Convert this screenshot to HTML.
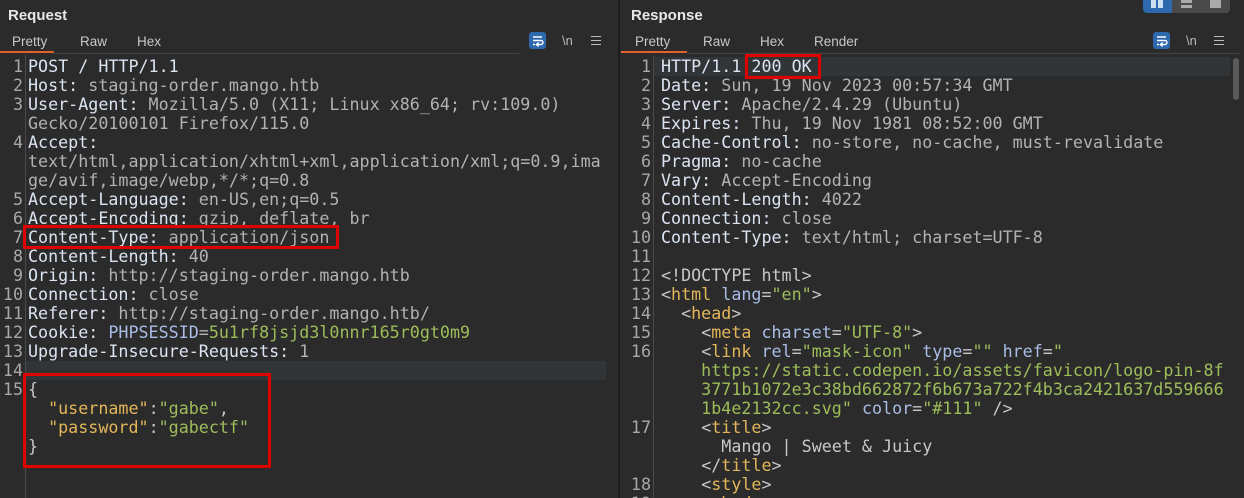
<!DOCTYPE html>
<html style="width:1244px;height:498px;overflow:hidden"><head><meta charset="utf-8"><style>
*{margin:0;padding:0;box-sizing:border-box}
body{width:1244px;height:498px;background:#2b2b2b;overflow:hidden;position:relative;font-family:"Liberation Sans",sans-serif;color:#ddd}
.t{position:absolute;font-weight:bold;font-size:15px;color:#e8e8e8}
.tab{position:absolute;top:34px;font-size:13.5px;color:#c8c8c8}
.ul{position:absolute;top:51px;height:2px;background:#e2622b}
.sep{position:absolute;top:53px;height:1px;background:#444}
.code{position:absolute;font-family:"DejaVu Sans Mono",monospace;font-size:16.7px;line-height:19px;white-space:pre;color:#b2b2b2}
.num{position:absolute;font-family:"DejaVu Sans Mono",monospace;font-size:16.7px;line-height:19px;white-space:pre;color:#a8a8a8;text-align:right}
.k{color:#dbe4f2}.b{color:#a9bde6}.g{color:#9dbd5a}.o{color:#e3b65a}.w{color:#c8c8c8}
.box{position:absolute;border:3px solid #e00000}
.hl{position:absolute;height:19px;background:#323538}
.gut{position:absolute;top:55px;width:1px;height:443px;background:#4a4a4a}
.ic{position:absolute;top:32px;width:17px;height:17px;background:#2e68ad;border-radius:3px}
.nl{position:absolute;top:33px;font-size:13px;color:#bbb;font-family:"Liberation Sans",sans-serif}
.hm{position:absolute;top:36px;width:10px;height:9px;border-top:1.5px solid #bbb;border-bottom:1.5px solid #bbb}
.hm:after{content:"";position:absolute;left:0;right:0;top:2.5px;border-top:1.5px solid #bbb}
.clip{position:absolute;left:0;top:0;width:1244px;height:498px;overflow:hidden}
</style></head><body><div class="clip">
<div style="position:absolute;left:618px;top:0;width:2px;height:498px;background:#1e1e1e"></div>
<div class="t" style="left:8px;top:7px">Request</div>
<div class="t" style="left:631px;top:7px">Response</div>
<div class="tab" style="left:12px">Pretty</div><div class="tab" style="left:80px">Raw</div><div class="tab" style="left:137px">Hex</div>
<div class="tab" style="left:635px">Pretty</div><div class="tab" style="left:703px">Raw</div><div class="tab" style="left:760px">Hex</div><div class="tab" style="left:814px">Render</div>
<div class="ul" style="left:0;width:54px"></div><div class="ul" style="left:621px;width:66px"></div>
<div class="sep" style="left:54px;width:465px"></div><div class="sep" style="left:687px;width:552px"></div>
<div class="ic" style="left:529px"><svg width="17" height="17"><path d="M4 5h9M4 8.5h8a2 2 0 0 1 0 4H8M9.5 10.5l-2 2 2 2M4 12.5h2" stroke="#fff" stroke-width="1.4" fill="none"/></svg></div>
<div class="nl" style="left:562px">\n</div><div class="hm" style="left:591px"></div>
<div class="ic" style="left:1153px"><svg width="17" height="17"><path d="M4 5h9M4 8.5h8a2 2 0 0 1 0 4H8M9.5 10.5l-2 2 2 2M4 12.5h2" stroke="#fff" stroke-width="1.4" fill="none"/></svg></div>
<div class="nl" style="left:1186px">\n</div><div class="hm" style="left:1214px"></div>
<div style="position:absolute;left:1143px;top:0;width:29px;height:13px;background:#2e68ad;border-radius:0 0 0 4px"></div>
<div style="position:absolute;left:1172px;top:0;width:29px;height:13px;background:#4a4a4a"></div>
<div style="position:absolute;left:1201px;top:0;width:29px;height:13px;background:#4a4a4a;border-radius:0 0 4px 0"></div>
<div style="position:absolute;left:1151px;top:0;width:5px;height:8px;background:#cfdff2"></div><div style="position:absolute;left:1158px;top:0;width:5px;height:8px;background:#cfdff2"></div>
<div style="position:absolute;left:1181px;top:0;width:11px;height:3px;background:#aaa"></div><div style="position:absolute;left:1181px;top:5px;width:11px;height:3px;background:#aaa"></div>
<div style="position:absolute;left:1210px;top:0;width:11px;height:8px;background:#aaa"></div>

<div class="gut" style="left:25px"></div><div class="gut" style="left:653px"></div>
<div class="hl" style="left:26px;top:361px;width:580px"></div>
<div class="hl" style="left:654px;top:57px;width:576px"></div>
<div style="position:absolute;left:1233px;top:58px;width:6px;height:42px;background:#5a5a5a;border-radius:3px"></div>

<div class="num" style="left:0;top:57px;width:23px">1
2
3

4


5
6
7
8
9
10
11
12
13
14
15</div>
<div class="code" style="left:28px;top:57px"><span class="k">POST / HTTP/1.1</span>
<span class="k">Host:</span> staging-order.mango.htb
<span class="k">User-Agent:</span> Mozilla/5.0 (X11; Linux x86_64; rv:109.0)
Gecko/20100101 Firefox/115.0
<span class="k">Accept:</span>
text/html,application/xhtml+xml,application/xml;q=0.9,ima
ge/avif,image/webp,*/*;q=0.8
<span class="k">Accept-Language:</span> en-US,en;q=0.5
<span class="k">Accept-Encoding:</span> gzip, deflate, br
<span class="k">Content-Type:</span> application/json
<span class="k">Content-Length:</span> 40
<span class="k">Origin:</span> http://staging-order.mango.htb
<span class="k">Connection:</span> close
<span class="k">Referer:</span> http://staging-order.mango.htb/
<span class="k">Cookie:</span> <span class="b">PHPSESSID</span>=<span class="g">5u1rf8jsjd3l0nnr165r0gt0m9</span>
<span class="k">Upgrade-Insecure-Requests:</span> 1

<span class="w">{</span>
  <span class="o">"username"</span><span class="w">:</span><span class="g">"gabe"</span><span class="w">,</span>
  <span class="o">"password"</span><span class="w">:</span><span class="g">"gabectf"</span>
<span class="w">}</span></div>
<div class="box" style="left:23px;top:225px;width:316px;height:24px"></div>
<div class="box" style="left:23px;top:373px;width:248px;height:95px"></div>

<div class="num" style="left:620px;top:57px;width:31px">1
2
3
4
5
6
7
8
9
10
11
12
13
14
15
16



17


18
19</div>
<div class="code" style="left:661px;top:57px"><span class="k">HTTP/1.1 200 OK</span>
<span class="k">Date:</span> Sun, 19 Nov 2023 00:57:34 GMT
<span class="k">Server:</span> Apache/2.4.29 (Ubuntu)
<span class="k">Expires:</span> Thu, 19 Nov 1981 08:52:00 GMT
<span class="k">Cache-Control:</span> no-store, no-cache, must-revalidate
<span class="k">Pragma:</span> no-cache
<span class="k">Vary:</span> Accept-Encoding
<span class="k">Content-Length:</span> 4022
<span class="k">Connection:</span> close
<span class="k">Content-Type:</span> text/html; charset=UTF-8

<span class="w">&lt;!DOCTYPE html&gt;</span>
<span class="w">&lt;</span><span class="o">html</span> <span class="b">lang</span><span class="w">=</span><span class="g">"en"</span><span class="w">&gt;</span>
  <span class="w">&lt;</span><span class="o">head</span><span class="w">&gt;</span>
    <span class="w">&lt;</span><span class="o">meta</span> <span class="b">charset</span><span class="w">=</span><span class="g">"UTF-8"</span><span class="w">&gt;</span>
    <span class="w">&lt;</span><span class="o">link</span> <span class="b">rel</span><span class="w">=</span><span class="g">"mask-icon"</span> <span class="b">type</span><span class="w">=</span><span class="g">""</span> <span class="b">href</span><span class="w">=</span><span class="g">"</span>
<span class="g">    https://static.codepen.io/assets/favicon/logo-pin-8f</span>
<span class="g">    3771b1072e3c38bd662872f6b673a722f4b3ca2421637d559666</span>
<span class="g">    1b4e2132cc.svg"</span> <span class="b">color</span><span class="w">=</span><span class="g">"#111"</span> <span class="w">/&gt;</span>
    <span class="w">&lt;</span><span class="o">title</span><span class="w">&gt;</span>
      <span class="w">Mango | Sweet &amp; Juicy</span>
    <span class="w">&lt;/</span><span class="o">title</span><span class="w">&gt;</span>
    <span class="w">&lt;</span><span class="o">style</span><span class="w">&gt;</span>
      <span class="o">body</span></div>
<div class="box" style="left:745px;top:54px;width:76px;height:25px"></div>
</div></body></html>
